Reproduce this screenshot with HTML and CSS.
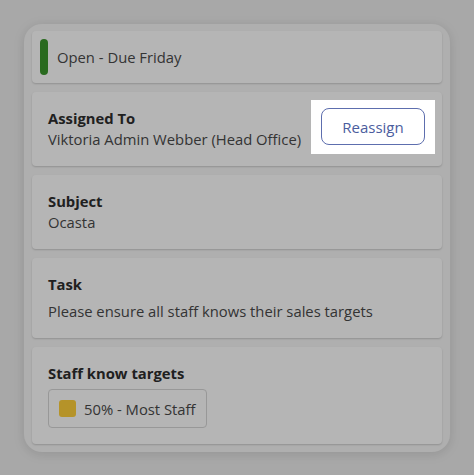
FILE: index.html
```html
<!DOCTYPE html>
<html lang="en">
<head>
  <meta charset="UTF-8">
  <meta name="viewport" content="width=device-width, initial-scale=1.0">
  <title>Task Detail</title>
  <link rel="stylesheet" href="styles.css">
</head>
<body>
  <div class="panel">
    <div class="card status">
      <div class="status-bar"></div>
      <div class="status-text">Open - Due Friday</div>
    </div>

    <div class="card assigned">
      <div class="info">
        <div class="label">Assigned To</div>
        <div class="value">Viktoria Admin Webber (Head Office)</div>
      </div>
      <div class="spotlight">
        <button class="btn-outline">Reassign</button>
      </div>
    </div>

    <div class="card">
      <div class="label">Subject</div>
      <div class="value">Ocasta</div>
    </div>

    <div class="card">
      <div class="label">Task</div>
      <div class="value task-text">Please ensure all staff knows their sales targets</div>
    </div>

    <div class="card">
      <div class="label">Staff know targets</div>
      <div class="chip">
        <span class="chip-dot"></span>
        <span>50% - Most Staff</span>
      </div>
    </div>
  </div>
</body>
</html>
```

FILE: styles.css
```css
* { margin: 0; padding: 0; box-sizing: border-box; }
html, body {
  background: #ededed;
  color: #333;
  font-family: "Open Sans", "Noto Sans", sans-serif;
  font-size: 14.8px;
  width: 100vw;
  height: 100vh;
  overflow: hidden;
}
body {
  padding: 24px;
}
.panel {
  width: 426px;
  background: #f7f7f7;
  border-radius: 18px;
  padding: 7px 8px 8px;
  display: flex;
  flex-direction: column;
  gap: 9px;
  box-shadow: 0 2px 12px rgba(0, 0, 0, 0.12);
}
.card {
  background: #fff;
  border-radius: 4px;
  padding: 16px;
  box-shadow: 0 1px 2px rgba(0, 0, 0, 0.18);
}
.label {
  font-weight: bold;
  line-height: 21px;
  color: #2e2e2e;
}
.value {
  line-height: 21px;
  color: #4a4a4a;
}
.task-text {
  margin-top: 6px;
}

/* status row */
.card.status {
  display: flex;
  align-items: center;
  gap: 9px;
  padding: 8px;
  height: 52px;
}
.status-bar {
  width: 8px;
  height: 36px;
  border-radius: 4px;
  background: #3a962c;
}
.status-text {
  color: #4a4a4a;
}

/* assigned row */
.card.assigned {
  display: flex;
  align-items: flex-start;
  justify-content: space-between;
  padding-right: 7px;
}
.spotlight {
  position: relative;
  z-index: 10;
  background: #fff;
  padding: 8px 10px 9px;
  margin: -8px 0 -8px;
  box-shadow: 0 0 0 2000px rgba(0, 0, 0, 0.29);
}
.btn-outline {
  display: block;
  width: 104px;
  height: 37px;
  background: #fff;
  border: 1px solid #5d6eae;
  border-radius: 8px;
  color: #4b5d9e;
  font-family: inherit;
  font-size: 15px;
}

/* chip */
.chip {
  display: inline-flex;
  align-items: center;
  gap: 8px;
  margin-top: 5px;
  height: 39px;
  padding: 0 10px;
  border: 1px solid #d6d6d6;
  border-radius: 4px;
  color: #4a4a4a;
}
.chip-dot {
  width: 17px;
  height: 17px;
  border-radius: 3px;
  background: #ffd03a;
}
```
